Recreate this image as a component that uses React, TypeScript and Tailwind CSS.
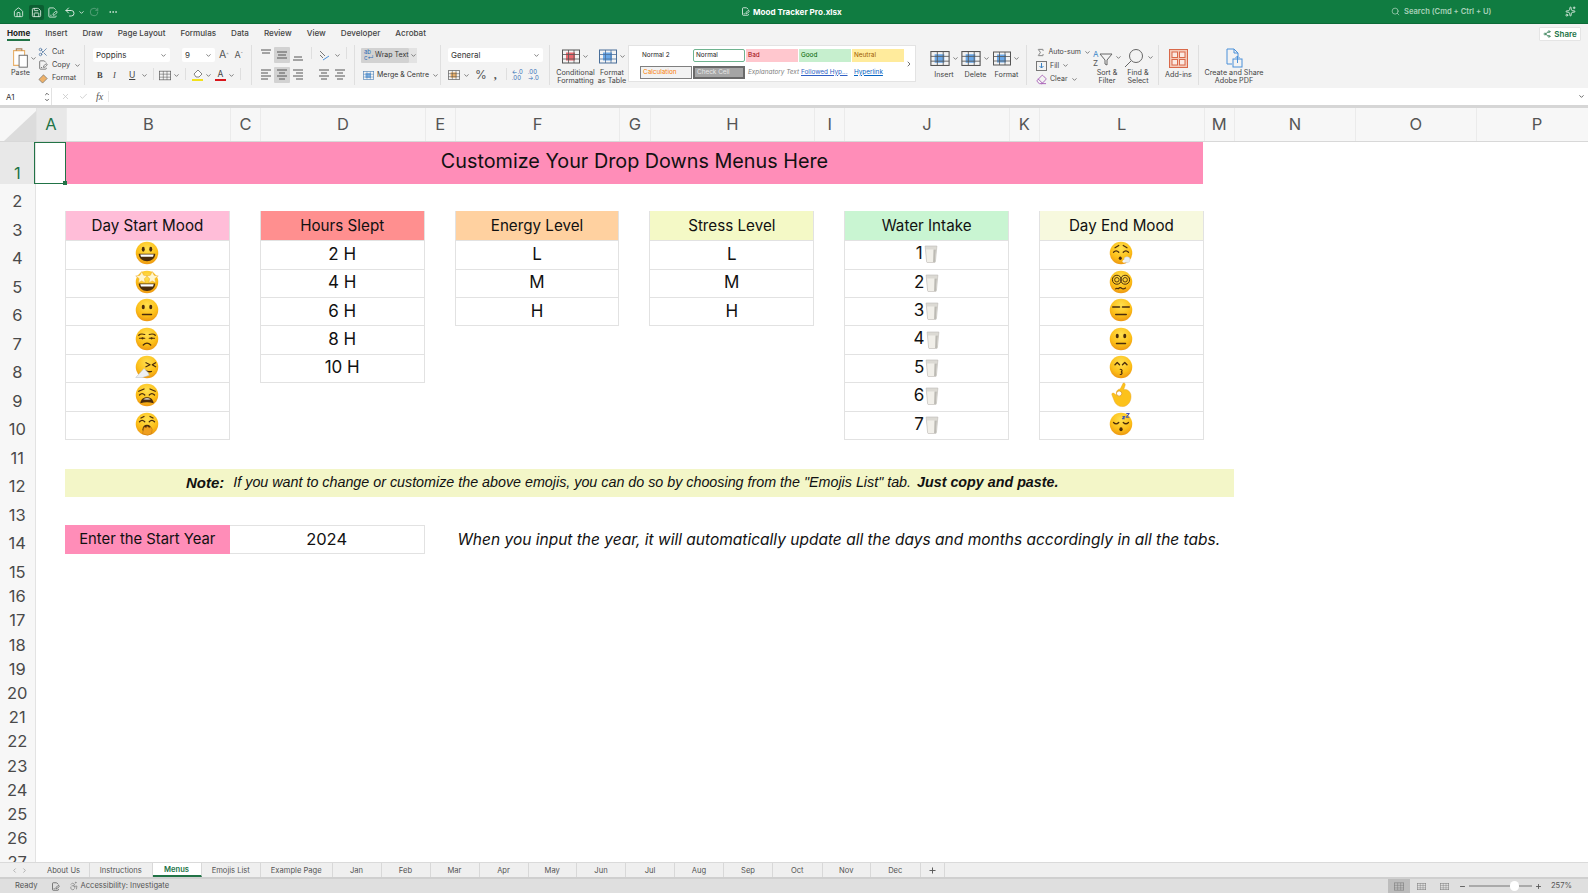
import React from "react";
import { Home, Save, Undo2, RotateCw, Ellipsis, Scissors, Search, FilePenLine, Sigma, Share2, ChevronRight, ChevronLeft, ChevronDown, Check, X, Plus, Minus, ChevronUp, Accessibility, Eraser, Sparkles } from "lucide-react";

const Caret = ({ c = "" }: { c?: string }) => <ChevronDown size={7} strokeWidth={2.5} className={"text-[#555] shrink-0 " + c} />;

function Grid({ w = 18, h = 14, fill, stroke = "#555" }: { w?: number; h?: number; fill?: string; stroke?: string }) {
  return (
    <svg width={w} height={h} viewBox="0 0 18 14" fill="none" className="shrink-0">
      {fill && <rect x="4" y="3" width="9" height="8" fill={fill} />}
      <rect x=".5" y=".5" width="17" height="13" stroke={stroke} />
      <path d="M.5 5h17M.5 9.5h17M6.5 .5v13M12 .5v13" stroke={stroke} strokeWidth=".8" />
    </svg>
  );
}

function Lines({ kind }: { kind: "top" | "mid" | "bot" | "left" | "center" | "right" }) {
  const p: Record<string, string> = {
    top: "M2 2h10M3 5h8",
    mid: "M2 4h10M3 7h8M2 10h10",
    bot: "M3 9h8M2 12h10",
    left: "M2 2h10M2 5h7M2 8h10M2 11h7",
    center: "M2 2h10M4 5h6M2 8h10M4 11h6",
    right: "M2 2h10M5 5h7M2 8h10M5 11h7",
  };
  return <svg width="14" height="14" viewBox="0 0 14 14" fill="none" stroke="#555" strokeWidth="1"><path d={p[kind]} /></svg>;
}

const Divider = ({ c = "" }: { c?: string }) => <div className={"w-px bg-[#dfdfdf] self-stretch " + c} />;

function TextLabel({ lines, c = "" }: { lines: string[]; c?: string }) {
  return <div className={"text-center text-[7.2px] leading-[7.8px] text-[#444] whitespace-nowrap " + c}>{lines.map((l) => <div key={l}>{l}</div>)}</div>;
}

function Clipboard() {
  return (
    <div className="w-[85px] flex pl-[10px] border-r border-[#dfdfdf] my-[3px] shrink-0">
      <div className="w-[28px] flex flex-col items-start">
        <div className="flex items-center h-[22px] mt-[2px]">
          <svg width="20" height="22" viewBox="0 0 20 24" fill="none">
            <path d="M3 4h12v16H3z" stroke="#e8b06a" strokeWidth="1.2" fill="#fff" />
            <path d="M6 4V2h6v2" stroke="#a9835c" strokeWidth="1.2" />
            <rect x="9" y="9" width="9" height="13" fill="#fff" stroke="#666" strokeWidth="1" />
          </svg>
          <Caret />
        </div>
        <div className="text-[7.2px] text-[#444] -mt-[1px] ml-[1px]">Paste</div>
      </div>
      <div className="flex flex-col gap-[2.5px] pt-[2px] text-[7.3px] leading-[10.5px] text-[#444]">
        <div className="flex items-center gap-[4px]"><Scissors size={10} className="text-[#5b7fa8]" /><span>Cut</span></div>
        <div className="flex items-center gap-[4px]"><FilePenLine size={10} className="text-[#666]" /><span>Copy</span><Caret /></div>
        <div className="flex items-center gap-[3px]"><svg width="11" height="11" viewBox="0 0 12 12"><path d="M1 7l5-5 4 4-5 5z" fill="#eeb26a" stroke="#666" strokeWidth=".7" /></svg><span>Format</span></div>
      </div>
    </div>
  );
}

function FontGroup() {
  return (
    <div className="w-[167px] shrink-0 border-r border-[#dfdfdf] my-[3px] pl-[8px] pt-[3px] flex flex-col gap-[6px]">
      <div className="flex items-center h-[14px]">
        <div className="w-[77px] h-[14px] bg-white rounded-[2px] flex items-center justify-between px-[3px] text-[8px] text-[#333]">Poppins<Caret /></div>
        <div className="w-[33px] h-[14px] bg-white rounded-[2px] ml-[12px] flex items-center justify-between px-[3px] text-[8px] text-[#333]">9<Caret /></div>
        <span className="ml-[4px] text-[10.5px] text-[#555]">A<sup className="text-[5px]">^</sup></span>
        <span className="ml-[6px] text-[9px] text-[#555]">A<sup className="text-[5px]">ˇ</sup></span>
      </div>
      <div className="flex items-center h-[14px] text-[8.5px] text-[#444]">
        <span className="ml-[4px] w-[16px] font-bold font-['Liberation_Serif',serif]">B</span>
        <span className="w-[16px] italic font-['Liberation_Serif',serif]">I</span>
        <span className="w-[12px] underline">U</span>
        <Caret />
        <Divider c="ml-[5px] h-[12px] self-center" />
        <div className="ml-[5px]"><Grid w={12} h={11} /></div>
        <Caret c="ml-[2px]" />
        <Divider c="ml-[5px] h-[12px] self-center" />
        <div className="ml-[6px] w-[11px] flex flex-col items-center">
          <svg width="10" height="8" viewBox="0 0 10 8"><path d="M5 0l4 4-3 3H3L1 4z" fill="#fff" stroke="#666" strokeWidth=".8" /></svg>
          <div className="w-[11px] h-[2px] bg-[#f2e11a] mt-[1px]" />
        </div>
        <Caret c="ml-[2px]" />
        <div className="ml-[3px] w-[11px] flex flex-col items-center text-[8.5px] leading-[9px]">A<div className="w-[11px] h-[2px] bg-[#d9151b]" /></div>
        <Caret c="ml-[2px]" />
        <Divider c="ml-[5px] h-[12px] self-center" />
      </div>
    </div>
  );
}

function AlignGroup() {
  const cell = "w-[16px] h-[16px] flex items-center justify-center";
  const on = cell + " bg-[#d2d2d2] rounded-[1px]";
  return (
    <div className="w-[103px] shrink-0 border-r border-[#dfdfdf] my-[3px] pl-[6px] pt-[2px] flex flex-col gap-[4px]">
      <div className="flex items-center">
        <div className={cell}><Lines kind="top" /></div>
        <div className={on}><Lines kind="mid" /></div>
        <div className={cell}><Lines kind="bot" /></div>
        <Divider c="ml-[5px] h-[12px] self-center" />
        <svg className="ml-[6px]" width="13" height="13" viewBox="0 0 13 13" fill="none" stroke="#777"><path d="M2 2l5 5M2 6l3 3" /><path d="M5 11l6-4" stroke="#4a90d9" /></svg>
        <Caret c="ml-[3px]" />
        <Divider c="ml-[5px] h-[12px] self-center" />
      </div>
      <div className="flex items-center">
        <div className={cell}><Lines kind="left" /></div>
        <div className={on}><Lines kind="center" /></div>
        <div className={cell}><Lines kind="right" /></div>
        <div className="w-[14px] ml-[11px]"><Lines kind="center" /></div>
        <div className="w-[14px] ml-[2px]"><Lines kind="center" /></div>
      </div>
    </div>
  );
}

function WrapGroup() {
  return (
    <div className="w-[86px] shrink-0 border-r border-[#dfdfdf] my-[3px] pl-[6px] pt-[3px] flex flex-col gap-[6px]">
      <div className="flex items-center h-[14px]">
        <div className="h-[15px] w-[48px] bg-[#d2d2d2] rounded-[1px] flex items-center text-[7px] text-[#333] gap-[2px] px-[3px] whitespace-nowrap">
          <span className="text-[6px] leading-[6px] text-[#2f6eb5] w-[9px]">ab<br />c↵</span>Wrap Text
        </div>
        <div className="h-[15px] w-[8px] bg-[#e3e3e3] flex items-center justify-center"><Caret /></div>
      </div>
      <div className="flex items-center h-[14px] text-[7px] text-[#333] pl-[2px] whitespace-nowrap">
        <Grid w={11} h={11} fill="#7fb2e5" stroke="#4a7fb5" />
        <span className="ml-[3px]">Merge &amp; Centre</span>
        <Caret c="ml-[3px]" />
      </div>
    </div>
  );
}

function NumberGroup() {
  return (
    <div className="w-[109px] shrink-0 border-r border-[#dfdfdf] my-[3px] pl-[7px] pt-[3px] flex flex-col gap-[6px]">
      <div className="w-[95px] h-[14px] bg-white rounded-[2px] flex items-center justify-between px-[3px] text-[8px] text-[#333]">General<Caret /></div>
      <div className="flex items-center h-[14px] text-[#555]">
        <Grid w={12} h={10} fill="#eeb26a" />
        <Caret c="ml-[3px]" />
        <span className="ml-[5px] text-[12px] leading-none">%</span>
        <span className="ml-[7px] text-[12px] leading-none font-bold font-['Liberation_Serif',serif]">,</span>
        <Divider c="ml-[9px] h-[12px] self-center" />
        <span className="ml-[5px] text-[6px] leading-[6px] text-[#2f6eb5] w-[13px]">←.0<br />.00</span>
        <span className="ml-[3px] text-[6px] leading-[6px] text-[#2f6eb5] w-[13px]">.00<br />→.0</span>
      </div>
    </div>
  );
}

function BigTool({ w, icon, lines, caret = true }: { w: string; icon: React.ReactNode; lines: string[]; caret?: boolean }) {
  return (
    <div className={"flex flex-col items-center shrink-0 " + w}>
      <div className="h-[23px] mt-[2px] flex items-center gap-[2px]">{icon}{caret && <Caret />}</div>
      <TextLabel lines={lines} c="mt-[1px]" />
    </div>
  );
}

function TableTools() {
  return (
    <div className="flex w-[78px] shrink-0 pt-[1px] pl-[5px]">
      <BigTool w="w-[41px]" lines={["Conditional", "Formatting"]} icon={<Grid w={18} h={15} fill="#e9686e" />} />
      <BigTool w="w-[32px]" lines={["Format", "as Table"]} icon={<Grid w={18} h={15} fill="#6aa8e8" stroke="#4a6f9a" />} />
    </div>
  );
}

function Styles() {
  const base = "w-[52px] h-[13px] flex items-center text-[6.4px] px-[2px] shrink-0 whitespace-nowrap";
  return (
    <div className="w-[288px] shrink-0 bg-white border border-[#e3e3e3] mt-[3px] mb-[6px] flex flex-col gap-[4px] pl-[11px] pt-[3px] relative">
      <div className="flex gap-[1px]">
        <div className={base + " text-[#222] pl-[2px]"}>Normal 2</div>
        <div className={base + " text-[#222] border border-[#6fb38f] rounded-[2px]"}>Normal</div>
        <div className={base + " bg-[#ffc7ce] text-[#9c0006]"}>Bad</div>
        <div className={base + " bg-[#c6efce] text-[#006100]"}>Good</div>
        <div className={base + " bg-[#ffeb9c] text-[#9c5700]"}>Neutral</div>
      </div>
      <div className="flex gap-[1px]">
        <div className={base + " bg-[#f2f2f2] text-[#fa7d00] border border-[#7f7f7f]"}>Calculation</div>
        <div className={base + " bg-[#a5a5a5] text-[#e8e8e8] border-2 border-[#6a6a6a]"}>Check Cell</div>
        <div className={base + " text-[#7f7f7f] italic"}>Explanatory Text</div>
        <div className={base + " text-[#2f5fc4] underline"}>Followed Hyp...</div>
        <div className={base + " text-[#0563c1] underline"}>Hyperlink</div>
      </div>
      <ChevronRight size={8} strokeWidth={2.5} className="absolute right-[2px] top-[14px] text-[#555]" />
    </div>
  );
}

function CellTools() {
  return (
    <div className="flex w-[111px] shrink-0 pl-[12px] border-r border-[#dfdfdf] my-[3px]">
      <BigTool w="w-[32px]" lines={["Insert"]} icon={<Grid w={20} h={15} fill="#6aa8e8" />} />
      <BigTool w="w-[31px]" lines={["Delete"]} icon={<Grid w={20} h={15} fill="#6aa8e8" />} />
      <BigTool w="w-[31px]" lines={["Format"]} icon={<Grid w={18} h={15} fill="#6aa8e8" />} />
    </div>
  );
}

function EditTools() {
  return (
    <div className="flex w-[132px] shrink-0 border-r border-[#dfdfdf] my-[3px] pl-[9px]">
      <div className="w-[55px] shrink-0 flex flex-col gap-[2.5px] pt-[2px] text-[7px] leading-[10.5px] text-[#444] whitespace-nowrap">
        <div className="flex items-center gap-[3px]"><Sigma size={11} className="text-[#666]" /><span>Auto-sum</span><Caret /></div>
        <div className="flex items-center gap-[3px]"><svg width="11" height="10" viewBox="0 0 11 10" fill="none"><rect x=".5" y=".5" width="10" height="9" stroke="#777" /><path d="M5.5 2v5M3.5 5l2 2 2-2" stroke="#3b82c4" /></svg><span>Fill</span><Caret /></div>
        <div className="flex items-center gap-[3px]"><Eraser size={11} className="text-[#a55bb5]" /><span>Clear</span><Caret /></div>
      </div>
      <BigTool w="w-[32px]" lines={["Sort &", "Filter"]} icon={<svg width="20" height="18" viewBox="0 0 20 18" fill="none"><text x="0" y="8" fontSize="8" fill="#3b86c9" fontFamily="Inter">A</text><text x="0" y="17" fontSize="8" fill="#555" fontFamily="Inter">Z</text><path d="M7 5h12l-5 6v5l-2-1v-4z" stroke="#666" /></svg>} />
      <BigTool w="w-[30px]" lines={["Find &", "Select"]} icon={<svg width="22" height="20" viewBox="0 0 22 20" fill="none" stroke="#666"><circle cx="13" cy="8" r="6.5" /><path d="M8 13l-6 6" /></svg>} />
    </div>
  );
}

function Addins() {
  return (
    <div className="flex w-[40px] shrink-0 border-r border-[#dfdfdf] my-[3px] justify-center">
      <BigTool w="w-[38px]" caret={false} lines={["Add-ins"]} icon={
        <svg width="19" height="19" viewBox="0 0 19 19" fill="#f4c9b8" stroke="#d9694a"><rect x=".5" y=".5" width="18" height="18" /><rect x="3" y="3" width="5.5" height="5.5" fill="#fbe9e2" /><rect x="10.5" y="3" width="5.5" height="5.5" fill="#fbe9e2" /><rect x="3" y="10.5" width="5.5" height="5.5" fill="#fbe9e2" /><rect x="10.5" y="10.5" width="5.5" height="5.5" fill="#fbe9e2" /></svg>
      } />
    </div>
  );
}

function Adobe() {
  return (
    <div className="flex w-[70px] shrink-0 justify-center my-[3px]">
      <BigTool w="w-[70px]" caret={false} lines={["Create and Share", "Adobe PDF"]} icon={
        <svg width="17" height="20" viewBox="0 0 17 20" fill="none" stroke="#4a90d9" strokeWidth="1"><path d="M1 1h7l4 4v3M1 1v15h5" /><path d="M8 1v4h4" /><rect x="7" y="11" width="9" height="8" fill="#f3f3f3" /><path d="M11.5 15V8M9.5 10l2-2 2 2" /></svg>
      } />
    </div>
  );
}

function TopBar() {
  return (
    <div className="h-[24px] bg-[#107c41] flex items-center text-white shrink-0 border-b border-[#0c6a37] relative pt-[1px]">
      <div className="flex items-center pl-[13px] text-[#d7e8dd] w-[130px] shrink-0">
        <Home size={11} />
        <div className="ml-[5px] w-[15px] h-[15px] bg-[#0b5e31] rounded-[2px] flex items-center justify-center"><Save size={11} /></div>
        <FilePenLine size={11} className="ml-[3px]" />
        <Undo2 size={12} className="ml-[6px]" />
        <ChevronDown size={7} className="ml-[2px]" strokeWidth={3} />
        <RotateCw size={10} className="ml-[4px] text-[#5fa57f]" />
        <Ellipsis size={10} className="ml-[9px]" />
      </div>
      <div className="flex items-center ml-[611px] w-[110px] font-bold text-[8.1px] gap-[3px] whitespace-nowrap">
        <FilePenLine size={9} />Mood Tracker Pro.xlsx
      </div>
      <div className="ml-auto flex items-center mr-[12px] text-[#a9d2ba] text-[7.6px] font-semibold">
        <Search size={9} className="mr-[4px]" />
        <span className="w-[161px]">Search (Cmd + Ctrl + U)</span>
        <Sparkles size={11} className="text-[#d7e8dd]" />
      </div>
    </div>
  );
}

function RibbonTabs() {
  const tabs = ["Home", "Insert", "Draw", "Page Layout", "Formulas", "Data", "Review", "View", "Developer", "Acrobat"];
  return (
    <div className="h-[18px] flex items-start shrink-0 pl-[7px] relative">
      <div className="flex gap-[15px] pt-[3px] text-[8.1px] font-medium text-[#444]">
        {tabs.map((t, i) => (
          <div key={t} className={i === 0 ? "font-bold text-[#222] border-b-2 border-[#217346] h-[14px]" : "h-[14px]"}>{t}</div>
        ))}
      </div>
      <div className="absolute right-[7px] top-[3px] w-[42px] h-[14px] bg-white border border-[#e5e5e5] rounded-[1px] flex items-center justify-center gap-[3px] text-[8px] font-semibold text-[#217346]">
        <Share2 size={8} />Share
      </div>
    </div>
  );
}

function FormulaBar() {
  return (
    <div className="h-[17px] bg-white flex items-center border-b-[3px] box-content border-[#d6d6d6] shrink-0 text-[#888]">
      <div className="w-[52px] h-full flex items-center justify-between pl-[6px] pr-[1px] text-[8px] text-[#333] border-r border-[#e2e2e2]">
        A1
        <div className="flex flex-col"><ChevronUp size={6} strokeWidth={3} /><ChevronDown size={6} strokeWidth={3} /></div>
      </div>
      <X size={9} className="ml-[9px] text-[#c4c4c4]" />
      <Check size={9} className="ml-[9px] text-[#c4c4c4]" />
      <span className="ml-[8px] italic text-[10px] text-[#555] font-['Liberation_Serif',serif]">fx</span>
      <div className="ml-[5px] w-px h-[11px] bg-[#e8e8e8]" />
      <ChevronDown size={7} strokeWidth={3} className="ml-auto mr-[3px] text-[#555]" />
    </div>
  );
}

const columns: [string, string][] = [
  ["A", "w-[30px]"], ["B", "w-[164.6px]"], ["C", "w-[30.1px]"], ["D", "w-[164.6px]"], ["E", "w-[30.1px]"], ["F", "w-[164.6px]"], ["G", "w-[30.1px]"],
  ["H", "w-[164.6px]"], ["I", "w-[30.1px]"], ["J", "w-[164.6px]"], ["K", "w-[30.1px]"], ["L", "w-[164.6px]"], ["M", "w-[30.4px]"], ["N", "w-[121px]"], ["O", "w-[121px]"], ["P", "w-[121px]"],
];

function ColumnHeader() {
  return (
    <div className="h-[34px] flex shrink-0 bg-[#f7f7f7] border-b border-[#d8d8d8]">
      <div className="w-[36.5px] shrink-0 border-r border-[#e3e3e3] flex items-end justify-end">
        <svg width="33" height="32" viewBox="0 0 33 32"><path d="M33 2v30H1z" fill="#dcdcdc" /></svg>
      </div>
      {columns.map(([n, w], i) => (
        <div key={n} className={w + " shrink-0 flex items-center justify-center text-[16.5px] border-r border-[#ebebeb] " + (i === 0 ? "bg-[#e8e8e8] text-[#217346]" : "text-[#555]")}>{n}</div>
      ))}
    </div>
  );
}

const rows: [number, string][] = [
  [1, "h-[41.5px]"], [2, "h-[28.5px]"], [3, "h-[28.5px]"], [4, "h-[28.5px]"], [5, "h-[28.5px]"], [6, "h-[28.5px]"], [7, "h-[28.5px]"], [8, "h-[28.5px]"], [9, "h-[28.5px]"], [10, "h-[28.5px]"],
  [11, "h-[28.5px]"], [12, "h-[28.5px]"], [13, "h-[28.5px]"], [14, "h-[28.5px]"], [15, "h-[29px]"], [16, "h-[24.2px]"], [17, "h-[24.2px]"], [18, "h-[24.2px]"], [19, "h-[24.2px]"], [20, "h-[24.2px]"],
  [21, "h-[24.2px]"], [22, "h-[24.2px]"], [23, "h-[24.2px]"], [24, "h-[24.2px]"], [25, "h-[24.2px]"], [26, "h-[24.2px]"], [27, "h-[24.2px]"],
];

function RowHeader() {
  return (
    <div className="w-[35.5px] shrink-0 bg-[#f7f7f7] border-r border-[#e3e3e3] overflow-hidden">
      {rows.map(([n, h]) => (
        <div key={n} className={h + " flex items-end justify-center pb-[1px] text-[16.5px] leading-[20px] " + (n === 1 ? "bg-[#e8e8e8] text-[#217346]" : "text-[#4a4a4a]")}>{n}</div>
      ))}
    </div>
  );
}

function Face({ children }: { children?: React.ReactNode }) {
  return (
    <svg width="24" height="24" viewBox="0 0 32 32" fill="none" className="shrink-0 -mt-[2px]">
      <defs>
        <radialGradient id="fg" cx="50%" cy="30%" r="75%">
          <stop offset="0%" stopColor="#ffe04f" />
          <stop offset="62%" stopColor="#fcbe17" />
          <stop offset="100%" stopColor="#e98f12" />
        </radialGradient>
      </defs>
      <circle cx="16" cy="16" r="15" fill="url(#fg)" />
      {children}
    </svg>
  );
}

const ink = "#4a2c0c";
const emojis: Record<string, React.ReactNode> = {
  smile: <Face><ellipse cx="11" cy="11" rx="2" ry="3.2" fill={ink} /><ellipse cx="21" cy="11" rx="2" ry="3.2" fill={ink} /><path d="M5 17h22c0 6-5 10-11 10S5 23 5 17z" fill={ink} /><path d="M7 18h18l-1 3H8z" fill="#fff" /></Face>,
  star: <Face><path d="M9 2l2.5 5 5 1-4 3.5 1 5.5-4.500-2.500L4.500 17l1-5.500L1 8l5.500-1zM23 2l2.500 5 5.500 1-4.500 3.500 1 5.500-4.500-2.500-4.500 2.500 1-5.500-4-3.500 5-1z" fill="#fff6d0" stroke="#e9a21f" strokeWidth=".6" /><path d="M5 18h22c0 6-5 10-11 10S5 24 5 18z" fill={ink} /><path d="M7 19h18l-1 3H8z" fill="#fff" /></Face>,
  neutral: <Face><ellipse cx="11" cy="12" rx="2" ry="3" fill={ink} /><ellipse cx="21" cy="12" rx="2" ry="3" fill={ink} /><path d="M10 22h12" stroke={ink} strokeWidth="2" strokeLinecap="round" /></Face>,
  unamused: <Face><path d="M5 11c2-2 5-2 8-1M19 10c3-1 6-1 8 1M6 15h7M19 15h7" stroke={ink} strokeWidth="1.6" strokeLinecap="round" /><circle cx="10" cy="15" r="1.5" fill={ink} /><circle cx="22" cy="15" r="1.5" fill={ink} /><path d="M11 24c3-3 7-3 10 0" stroke={ink} strokeWidth="1.8" strokeLinecap="round" /></Face>,
  sneeze: <Face><path d="M14 10l6 3-6 3M28 10l-5 3 5 3" stroke={ink} strokeWidth="1.7" strokeLinejoin="round" /><path d="M14 21c3 1 5 2 8 1" stroke={ink} strokeWidth="1.7" strokeLinecap="round" /><path d="M1 30l11-12 5 5 2 4-9 3z" fill="#eef0f2" stroke="#b9bfc5" strokeWidth=".7" /></Face>,
  weary: <Face><path d="M5 11l7-3M27 11l-7-3M6 16c2-2 5-2 7 0M19 16c2-2 5-2 7 0" stroke={ink} strokeWidth="1.7" strokeLinecap="round" /><path d="M7 27c1-6 5-8 9-8s8 2 9 8c-6-2-12-2-18 0z" fill={ink} /><path d="M11 21.500c3-1.500 7-1.500 10 0-3 .5-7 .5-10 0z" fill="#fff" /></Face>,
  yawn: <Face><path d="M6 13c2-2 5-2 7 0M19 13c2-2 5-2 7 0M8 8l4-2M24 8l-4-2" stroke={ink} strokeWidth="1.7" strokeLinecap="round" /><ellipse cx="16" cy="23" rx="6" ry="6" fill={ink} /><path d="M10 29l2-9 3 1 1-2 3 2 2-1 2 3-1 6-5 2z" fill="#ef9f1f" stroke="#b66b0c" strokeWidth=".6" /></Face>,
  exhale: <Face><path d="M8 9l5-3M24 9l-5-3M6 15c2-2 5-2 7 0M19 15c2-2 5-2 7 0" stroke={ink} strokeWidth="1.7" strokeLinecap="round" /><ellipse cx="15" cy="23" rx="2" ry="2.4" fill={ink} /><circle cx="24" cy="25" r="4" fill="#e9eff5" stroke="#c5d0da" strokeWidth=".6" /><circle cx="20" cy="27" r="2" fill="#f3f6f9" /></Face>,
  dizzy: <Face><circle cx="10.5" cy="13" r="6" stroke={ink} strokeWidth="1.3" /><circle cx="10.5" cy="13" r="3" stroke={ink} strokeWidth="1.2" /><circle cx="21.5" cy="13" r="6" stroke={ink} strokeWidth="1.3" /><circle cx="21.5" cy="13" r="3" stroke={ink} strokeWidth="1.2" /><path d="M9 25c2-2 3 1 4-.5s3-1 4 0 3 1 5-.5" stroke={ink} strokeWidth="1.6" strokeLinecap="round" /></Face>,
  expr: <Face><path d="M5 12h9M18 12h9M9 22h14" stroke={ink} strokeWidth="2" strokeLinecap="round" /></Face>,
  kiss: <Face><path d="M8 13l3-3 3 3M18 13l3-3 3 3" stroke={ink} strokeWidth="1.8" strokeLinecap="round" strokeLinejoin="round" /><path d="M15 19c3 0 3 3 1 3.5 2 .5 2 3.5-1 3.5" stroke={ink} strokeWidth="1.6" strokeLinecap="round" /></Face>,
  ok: (
    <svg width="24" height="26" viewBox="0 0 32 34" fill="none" className="shrink-0 -mt-[2px]">
      <path d="M19 1c2-.5 3 1 2.500 3l-2 6c4-1 8 1 9.500 6 1.500 7-2 14-8 16-6 1.500-11-1-13.500-6L4 17c-1-2 1-3.500 3-2l3 2.500C9 13 11 9 15 9z" fill="#fcc21b" stroke="#e9a21f" strokeWidth=".6" />
      <circle cx="13.500" cy="15" r="3.500" fill="#fff" stroke="#d9911a" />
    </svg>
  ),
  sleep: <Face><path d="M6 14c2 2 5 2 7 0M19 14c2 2 5 2 7 0" stroke={ink} strokeWidth="1.7" strokeLinecap="round" /><ellipse cx="16" cy="23" rx="2.2" ry="2.6" fill={ink} /><path d="M18 6h3l-3 3h3M23 2h4l-4 5h4" stroke="#3f51b5" strokeWidth="1.5" strokeLinejoin="round" /></Face>,
};

function Glass() {
  return (
    <svg width="14" height="18" viewBox="0 0 13 18" fill="none" className="shrink-0">
      <path d="M.6 1h11.8l-1.500 15.600c0 .6-.5 1-1 1H3.100c-.5 0-1-.4-1-1z" fill="#dcdad4" stroke="#bdbbb6" strokeWidth=".6" />
      <path d="M1.600 4.500h9.800l-1 12.500H2.600z" fill="#f1efe9" />
      <path d="M9 4.500h2.400l-1 12.500H8.600z" fill="#bcbab4" />
    </svg>
  );
}

const poppins = "font-['Inter',sans-serif]";

function Table({ title, head, items }: { title: string; head: string; items: React.ReactNode[] }) {
  return (
    <div className="w-[164.8px] shrink-0 border border-[#e2e2e2] border-t-0 self-start">
      <div className={"h-[29px] flex items-center justify-center pt-[1px] text-[15.2px] text-[#111] " + poppins + " " + head}>{title}</div>
      {items.map((it, i) => (
        <div key={i} className={"h-[28.4px] flex items-center justify-center border-t border-[#e2e2e2] text-[17px] text-[#111] pb-[1px] " + poppins}>{it}</div>
      ))}
    </div>
  );
}

const water = [1, 2, 3, 4, 5, 6, 7].map((n) => <div key={n} className="flex items-center gap-[1px]"><span className="-mt-[1px]">{n}</span><Glass /></div>);

function Sheet() {
  return (
    <div className="flex-1 min-w-0 relative">
      <div className="flex h-[41.5px]">
        <div className="w-[32px] -ml-[1.5px] shrink-0 border-[1.5px] border-[#217346] relative z-10">
          <div className="absolute -right-[2px] -bottom-[2px] w-[4px] h-[4px] bg-[#217346]" />
        </div>
        <div className={"w-[1137px] shrink-0 bg-[#ff8db8] flex items-center justify-center pb-[1px] text-[19.8px] text-[#111] " + poppins}>Customize Your Drop Downs Menus Here</div>
      </div>
      <div className="flex gap-[30px] pl-[29.5px] mt-[27.8px] h-[229px]">
        <Table title="Day Start Mood" head="bg-[#ffbdd8]" items={["smile", "star", "neutral", "unamused", "sneeze", "weary", "yawn"].map((k) => emojis[k])} />
        <Table title="Hours Slept" head="bg-[#ff8f8f]" items={["2 H", "4 H", "6 H", "8 H", "10 H"]} />
        <Table title="Energy Level" head="bg-[#ffd1a0]" items={["L", "M", "H"]} />
        <Table title="Stress Level" head="bg-[#f4f9c6]" items={["L", "M", "H"]} />
        <Table title="Water Intake" head="bg-[#c9f5d2]" items={water} />
        <Table title="Day End Mood" head="bg-[#f7f9de]" items={["exhale", "dizzy", "expr", "neutral", "kiss", "ok", "sleep"].map((k) => emojis[k])} />
      </div>
      <div className="ml-[29.5px] mt-[28.5px] w-[1168.9px] h-[28.4px] bg-[#f3f6c8] flex items-center pl-[121px] text-[14.3px] italic text-[#111] font-['Liberation_Sans',sans-serif] whitespace-nowrap">
        <b className="text-[15px] mr-[9px]">Note:</b>
        <span>If you want to change or customize the above emojis, you can do so by choosing from the "Emojis List" tab.</span>
        <b className="ml-[6px]">Just copy and paste.</b>
      </div>
      <div className="flex items-center ml-[29.5px] mt-[28px] h-[28.4px]">
        <div className={"w-[164.6px] h-full bg-[#ff8db8] flex items-center justify-center text-[14.8px] text-[#111] " + poppins}>Enter the Start Year</div>
        <div className={"w-[195px] h-full border border-[#e2e2e2] border-l-0 flex items-center justify-center text-[16.5px] text-[#111] " + poppins}>2024</div>
        <div className={"ml-[33px] text-[15.5px] italic text-[#111] whitespace-nowrap " + poppins}>When you input the year, it will automatically update all the days and months accordingly in all the tabs.</div>
      </div>
    </div>
  );
}

function SheetTabs() {
  const tabs = [
    ["About Us", "w-[52px]"], ["Instructions", "w-[62.5px]"], ["Menus", "w-[49px]"], ["Emojis List", "w-[59.5px]"], ["Example Page", "w-[71.5px]"],
    ["Jan", "w-[49px]"], ["Feb", "w-[49px]"], ["Mar", "w-[49px]"], ["Apr", "w-[49px]"], ["May", "w-[48.5px]"], ["Jun", "w-[49px]"], ["Jul", "w-[49px]"], ["Aug", "w-[49px]"], ["Sep", "w-[49px]"], ["Oct", "w-[49.5px]"], ["Nov", "w-[48.5px]"], ["Dec", "w-[49.5px]"],
  ];
  return (
    <div className="h-[15px] shrink-0 bg-[#efefef] border-t border-[#dadada] flex items-stretch text-[7.6px] text-[#555]">
      <div className="w-[38px] flex items-center justify-center gap-[3px] text-[#aaa]"><ChevronLeft size={7} strokeWidth={3} /><ChevronRight size={7} strokeWidth={3} /></div>
      {tabs.map(([t, w]) => (
        <div key={t} className={w + " flex items-center justify-center pt-[1px] border-r border-[#d8d8d8] whitespace-nowrap " + (t === "Menus" ? "bg-white text-[#217346] font-semibold border-b-2 border-b-[#217346]" : "")}>{t}</div>
      ))}
      <div className="w-[24px] flex items-center justify-center border-r border-[#d8d8d8] text-[#555]"><Plus size={9} strokeWidth={2.5} /></div>
    </div>
  );
}

function StatusBar() {
  return (
    <div className="h-[16px] shrink-0 bg-[#dfdfdf] border-t-2 border-[#cfcfcf] flex items-center text-[7.6px] text-[#555]">
      <span className="ml-[15px]">Ready</span>
      <FilePenLine size={9} className="ml-[13px]" />
      <Accessibility size={10} className="ml-[9px] text-[#888]" />
      <span className="ml-[2px]">Accessibility: Investigate</span>
      <div className="ml-auto h-full flex items-center mr-[16px]">
        <div className="w-[22px] h-full bg-[#bdbdbd] flex items-center justify-center"><Grid w={10} h={9} stroke="#777" /></div>
        <div className="w-[23px] flex justify-center"><Grid w={9} h={9} stroke="#777" /></div>
        <div className="w-[23px] flex justify-center"><Grid w={9} h={9} stroke="#777" /></div>
        <Minus size={7} strokeWidth={3} className="ml-[3px]" />
        <div className="w-[63px] h-[2px] bg-[#aaa] ml-[3px] relative"><div className="absolute left-[41px] -top-[4px] w-[9px] h-[10px] rounded-full bg-white" /></div>
        <Plus size={7} strokeWidth={3} className="ml-[3px]" />
        <span className="ml-[9px]">257%</span>
      </div>
    </div>
  );
}

export default function App() {
  return (
    <div className="w-[1588px] h-[893px] overflow-hidden flex flex-col bg-white font-['Inter',sans-serif]">
      <TopBar />
      <div className="bg-[#f3f3f3] shrink-0 h-[64px] flex flex-col">
        <RibbonTabs />
        <div className="flex flex-1 min-h-0">
          <Clipboard />
          <FontGroup />
          <AlignGroup />
          <WrapGroup />
          <NumberGroup />
          <TableTools />
          <Styles />
          <CellTools />
          <EditTools />
          <Addins />
          <Adobe />
        </div>
      </div>
      <FormulaBar />
      <ColumnHeader />
      <div className="flex-1 min-h-0 flex overflow-hidden">
        <RowHeader />
        <Sheet />
      </div>
      <SheetTabs />
      <StatusBar />
    </div>
  );
}
